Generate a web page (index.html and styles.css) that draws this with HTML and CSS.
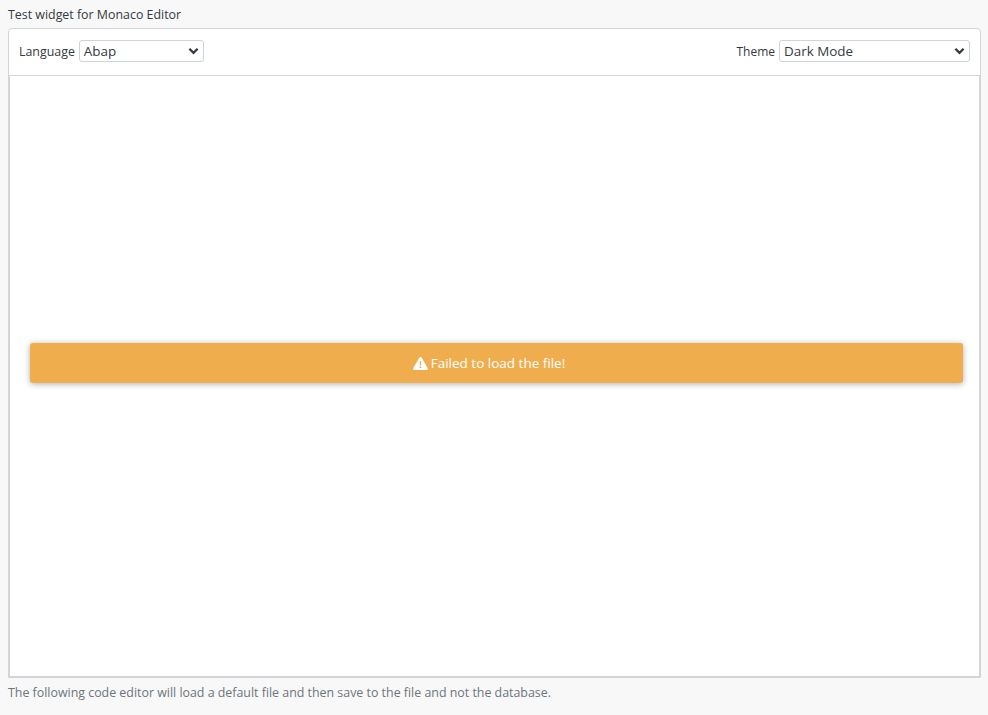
FILE: index.html
```html
<!DOCTYPE html>
<html lang="en">
<head>
<meta charset="utf-8">
<title>Monaco Editor widget</title>
<link rel="stylesheet" href="styles.css">
</head>
<body>
<div class="title">Test widget for Monaco Editor</div>
<div class="card">
  <div class="toolbar">
    <label class="field"><span class="field-label">Language</span>
      <span class="select select-language">Abap
        <svg class="chev" viewBox="0 0 12 8" width="11" height="8"><path d="M1.500 1.500 6 6l4.500-4.500" fill="none" stroke="#343a40" stroke-width="2.500"/></svg>
      </span>
    </label>
    <label class="field"><span class="field-label field-label-theme">Theme</span>
      <span class="select select-theme">Dark Mode
        <svg class="chev" viewBox="0 0 12 8" width="11" height="8"><path d="M1.500 1.500 6 6l4.500-4.500" fill="none" stroke="#343a40" stroke-width="2.500"/></svg>
      </span>
    </label>
  </div>
  <div class="editor">
    <div class="alert">
      <svg class="warn" viewBox="0 0 16 14" width="15" height="13"><path fill-rule="evenodd" fill="#fff" d="M8 0c.5 0 1 .3 1.300.8l6.400 11c.6 1-.1 2.200-1.300 2.200H1.600C.4 14-.3 12.800.3 11.800l6.400-11C7 .3 7.500 0 8 0zM7.100 4.500l.2 4.500h1.400l.2-4.500H7.100zM8 10a1 1 0 1 0 0 2A1 1 0 0 0 8 10z"/></svg>
      <span>Failed to load the file!</span>
    </div>
  </div>
</div>
<p class="help">The following code editor will load a default file and then save to the file and not the database.</p>
</body>
</html>
```
FILE: styles.css
```css
* { box-sizing: border-box; }
html, body { height: 100%; }
body {
  margin: 0;
  padding: 6px 7px 0 8px;
  background: #f8f8f8;
  font-family: "Open Sans", "Noto Sans", sans-serif;
  font-size: 12.4px;
  color: #343a40;
}
.title {
  height: 22px;
  line-height: 18px;
}
.card {
  height: 650px;
  display: flex;
  flex-direction: column;
  background: #fff;
  border: 1px solid #d2d6da;
  border-radius: 4px 4px 0 0;
}
.toolbar {
  height: 46px;
  flex: none;
  display: flex;
  justify-content: space-between;
  align-items: center;
  padding: 0 10px 2px;
}
.field {
  display: flex;
  align-items: center;
  gap: 4px;
  color: #343a40;
}
.field-label-theme { font-size: 12px; }
.select {
  height: 22px;
  display: flex;
  align-items: center;
  justify-content: space-between;
  padding: 0 4px 0 4px;
  border: 1px solid #ced4da;
  border-radius: 3px;
  background: #fff;
  font-size: 13.4px;
  color: #343a40;
}
.select-language { width: 125px; }
.select-theme { width: 191px; }
.editor {
  flex: 1;
  display: flex;
  align-items: center;
  padding: 0 16px 26px 20px;
  border: 1px solid #d2d6da;
}
.alert {
  flex: 1;
  height: 40px;
  display: flex;
  align-items: center;
  justify-content: center;
  gap: 3px;
  padding-right: 15px;
  background: #f0ad4e;
  border-radius: 3px;
  box-shadow: 0 1px 6px rgba(0, 0, 0, .32);
  color: #fff;
  font-size: 13.5px;
}
.warn { flex: none; }
.help {
  margin: 5px 0 0;
  line-height: 20px;
  color: #6c757d;
}
```
